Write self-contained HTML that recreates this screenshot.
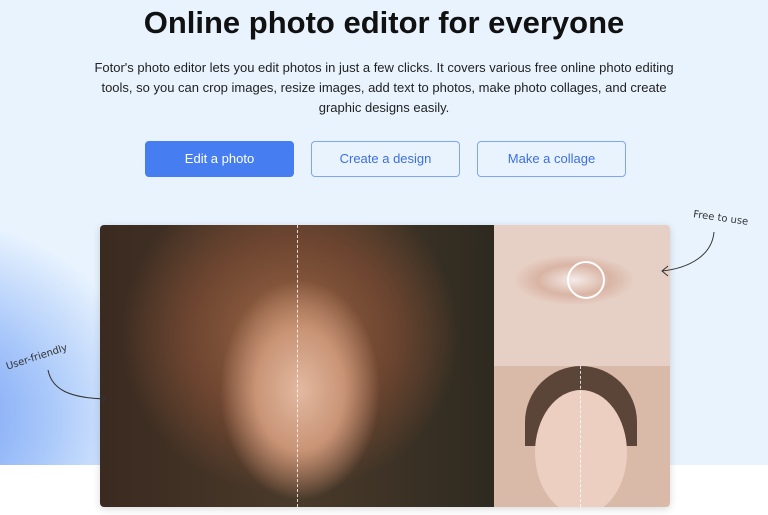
<!DOCTYPE html>
<html><head><meta charset="utf-8"><style>
*{margin:0;padding:0;box-sizing:border-box}
body{width:768px;height:515px;overflow:hidden;font-family:"Liberation Sans",sans-serif;position:relative;background:#e8f3fe}
.bottom{position:absolute;left:0;top:465px;width:768px;height:50px;background:#fff}
.glow{position:absolute;left:-120px;top:230px;width:260px;height:235px;background:radial-gradient(ellipse at 20% 80%,#6f9bf4 0%,#a9c8fa 40%,rgba(232,243,254,0) 75%)}
h1{position:absolute;top:5px;left:0;width:768px;text-align:center;font-size:31px;font-weight:bold;color:#111}
p{position:absolute;top:58px;left:80px;width:608px;text-align:center;font-size:13px;line-height:20px;color:#222}
.btn{position:absolute;top:141px;height:36px;width:149px;border-radius:4px;font-size:13px;line-height:34px;text-align:center;border:1px solid #7ea6f4;color:#3d6fe0}
.card{position:absolute;left:100px;top:225px;width:570px;height:282px;border-radius:4px;overflow:hidden;box-shadow:0 2px 8px rgba(0,0,0,.15)}
.l{position:absolute;left:0;top:0;width:394px;height:282px;background:
radial-gradient(ellipse 80px 110px at 200px 165px,#e2b9a0 0%,#c99476 55%,rgba(120,70,45,0) 100%),
radial-gradient(ellipse 170px 160px at 190px 110px,#9b6646 0%,#6d4530 60%,rgba(50,40,30,0) 100%),
linear-gradient(90deg,#3a2a20,#4a3a2a 50%,#2e2a20)}
.rt{position:absolute;left:394px;top:0;width:176px;height:141px;background:radial-gradient(ellipse 60px 25px at 80px 55px,#f4ece8,#d9b4a4 60%,#e6cfc4)}
.rb{position:absolute;left:394px;top:141px;width:176px;height:141px;background:#d9b9a8}
.face{position:absolute;left:435px;top:165px;width:92px;height:125px;border-radius:50%;background:#eccfc0}
.hair{position:absolute;left:425px;top:141px;width:112px;height:80px;border-radius:56px 56px 0 0;background:#5a4538}
.dash{position:absolute;top:0;height:282px;border-left:1px dashed rgba(255,255,255,.8)}
.note{position:absolute;font-family:"DejaVu Sans",sans-serif;font-size:10px;color:#333}
</style></head><body>
<div class="bottom"></div><div class="glow"></div>
<h1>Online photo editor for everyone</h1>
<p>Fotor's photo editor lets you edit photos in just a few clicks. It covers various free online photo editing tools, so you can crop images, resize images, add text to photos, make photo collages, and create graphic designs easily.</p>
<div class="btn" style="left:145px;background:#467ef2;border-color:#467ef2;color:#fff">Edit a photo</div>
<div class="btn" style="left:311px">Create a design</div>
<div class="btn" style="left:477px">Make a collage</div>
<div class="card">
<div class="l"></div>
<div class="rt"></div>
<div class="rb"></div>
<div class="hair"></div>
<div class="face"></div>
<div class="dash" style="left:197px"></div>
<div class="dash" style="left:480px;top:141px;height:141px"></div>
<div style="position:absolute;left:467px;top:36px;width:38px;height:38px;border:2px solid #fff;border-radius:50%"></div>
</div>
<div class="note" style="left:693px;top:213px;transform:rotate(8deg)">Free to use</div>
<div class="note" style="left:5px;top:352px;transform:rotate(-18deg)">User-friendly</div>
<svg style="position:absolute;left:0;top:0" width="768" height="515"><path d="M714 232 C712 255 690 268 662 271 M668 266 L662 271 L668 276" fill="none" stroke="#333" stroke-width="1"/><path d="M48 370 C52 390 70 398 106 399 M100 394 L106 399 L100 404" fill="none" stroke="#333" stroke-width="1"/></svg>
</body></html>
